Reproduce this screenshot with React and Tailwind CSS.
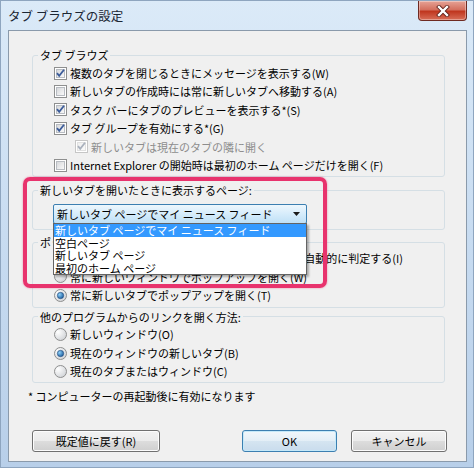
import React from 'react';

const font = "font-['Noto_Sans_CJK_JP',sans-serif]";

// Win7 style checkbox glyph
const CheckBox = ({ checked, disabled }) => (
  <svg width="13" height="13" viewBox="0 0 13 13" className="shrink-0">
    <defs>
      <linearGradient id={disabled ? 'cbd' : 'cbg'} x1="0" y1="0" x2="1" y2="1">
        <stop offset="0" stopColor={disabled ? '#eeeeee' : '#d4d6d9'} />
        <stop offset="1" stopColor="#fbfbfb" />
      </linearGradient>
    </defs>
    <rect x="0.5" y="0.5" width="12" height="12" fill="#fff" stroke={disabled ? '#c6c6c6' : '#8e8f8f'} />
    <rect x="2.5" y="2.5" width="8" height="8" fill={`url(#${disabled ? 'cbd' : 'cbg'})`} stroke={disabled ? '#e0e0e0' : '#b8bcc2'} />
    {checked && (
      <path d="M3 6.2 L5.2 8.8 L10 2.8" fill="none" stroke={disabled ? '#a9b1bd' : '#3c5c9a'} strokeWidth="1.8" />
    )}
  </svg>
);

const Radio = ({ checked }) => (
  <svg width="13" height="13" viewBox="0 0 13 13" className="shrink-0">
    <defs>
      <radialGradient id="rbg" cx="0.3" cy="0.3" r="0.8">
        <stop offset="0" stopColor="#ffffff" />
        <stop offset="1" stopColor="#cfd2d6" />
      </radialGradient>
      <radialGradient id="rdot" cx="0.35" cy="0.35" r="0.7">
        <stop offset="0" stopColor="#8ed0f8" />
        <stop offset="1" stopColor="#1a5c9e" />
      </radialGradient>
    </defs>
    <circle cx="6.5" cy="6.5" r="6" fill="url(#rbg)" stroke="#8e8f8f" />
    {checked && <circle cx="6.5" cy="6.5" r="3.2" fill="url(#rdot)" stroke="#2a4f7c" strokeWidth="0.6" />}
  </svg>
);

const Row = ({ children, indent, gray }) => (
  <div className={`h-[18.4px] flex items-center gap-[3px] whitespace-nowrap ${indent ? 'pl-[21px]' : ''} ${gray ? 'text-[#8d8d8d]' : ''}`}>
    {children}
  </div>
);

const Group = ({ title, className, children }) => (
  <fieldset className={`border border-[#d5dfe5] rounded-[3px] min-w-0 ${className}`}>
    <legend className="ml-[5px] px-[2px] leading-[14px]">{title}</legend>
    {children}
  </fieldset>
);

const CloseButton = () => (
  <div className="w-[49px] h-[20px] rounded-b-[4px] border border-t-0 border-[#6e2a22] bg-[linear-gradient(#e6a396,#d4705f_45%,#c0371f_55%,#d86e58)] flex items-center justify-center shadow-[inset_0_0_0_1px_rgba(255,255,255,0.35)]">
    <svg width="14" height="12" viewBox="0 0 14 12">
      <path d="M3 2 L11 10 M11 2 L3 10" stroke="#5b1d16" strokeWidth="4" strokeLinecap="square" />
      <path d="M3 2 L11 10 M11 2 L3 10" stroke="#ffffff" strokeWidth="2.4" strokeLinecap="square" />
    </svg>
  </div>
);

const Button = ({ children, primary, className }) => (
  <button
    className={`h-[22px] rounded-[3px] border text-[11px] leading-none flex items-center justify-center ${
      primary
        ? 'border-[#3c7fb1] bg-[linear-gradient(#f1f7fb,#e3eef6_50%,#d5e5f1_50%,#c9dced)] shadow-[inset_0_0_0_1px_#c5e9f9]'
        : 'border-[#707070] bg-[linear-gradient(#f2f2f2,#ebebeb_50%,#dddddd_50%,#cfcfcf)] shadow-[inset_0_0_0_1px_#fcfcfc]'
    } ${className}`}
  >
    {children}
  </button>
);

const options = ['新しいタブ ページでマイ ニュース フィード', '空白ページ', '新しいタブ ページ', '最初のホーム ページ'];

export default function App() {
  return (
    <div className={`w-[474px] h-[468px] flex flex-col bg-gradient-to-b from-[#dbeaf8] via-[#c8dcf1] to-[#b8cfe9] border border-[#8ea5bf] text-[11px] text-black ${font}`}>
      {/* title bar */}
      <div className="h-[29px] shrink-0 flex items-start justify-between pl-[7px] pr-[6px]">
        <span className="mt-[6px] text-[12.5px] text-[#1b2633]">タブ ブラウズの設定</span>
        <CloseButton />
      </div>

      {/* client area */}
      <div className="relative flex-1 ml-[7px] mr-[6px] mb-[5px] border border-[#8a9aab] bg-[#f0f0f0] flex flex-col pl-[23px] pr-[21px] pt-[17px] pb-[9px]">
        <Group title="タブ ブラウズ">
          <div className="pl-[21px] pt-[2px] pb-[2px]">
            <Row><CheckBox checked />複数のタブを閉じるときにメッセージを表示する(W)</Row>
            <Row><CheckBox />新しいタブの作成時には常に新しいタブへ移動する(A)</Row>
            <Row><CheckBox checked />タスク バーにタブのプレビューを表示する*(S)</Row>
            <Row><CheckBox checked />タブ グループを有効にする*(G)</Row>
            <Row indent gray><CheckBox checked disabled />新しいタブは現在のタブの隣に開く</Row>
            <Row><CheckBox />Internet Explorer の開始時は最初のホーム ページだけを開く(F)</Row>
          </div>
        </Group>

        <Group title="新しいタブを開いたときに表示するページ:" className="mt-[6px]">
          <div className="pl-[20px] pt-[7px] pb-[5px]">
            <div className="relative w-[254px]">
              <div className="h-[20px] rounded-[2px] border border-[#3c7fb1] bg-[linear-gradient(#eef7fd,#d6ecfb_50%,#bfe0f6)] flex items-center justify-between pl-[3px] pr-[6px]">
                <span>{options[0]}</span>
                <svg width="7" height="4" viewBox="0 0 7 4"><path d="M0 0 H7 L3.5 4 Z" fill="#1a1a1a" /></svg>
              </div>
              {/* open list */}
              <div className="absolute left-0 top-[19px] z-10 w-[254px] bg-white border border-[#646464] shadow-[2px_2px_2px_rgba(0,0,0,0.3)]">
                {options.map((o, i) => (
                  <div key={o} className={`h-[12.5px] leading-[12.5px] pl-[1px] ${i === 0 ? 'bg-[#3399ff] text-white' : ''}`}>{o}</div>
                ))}
              </div>
            </div>
          </div>
        </Group>

        <Group title="ポップアップの発生時:" className="mt-[5px]">
          <div className="pl-[21px] pb-[2px]">
            <Row><Radio />ポップアップを開く方法を Internet Explorer で自動的に判定する(I)</Row>
            <Row><Radio />常に新しいウィンドウでポップアップを開く(W)</Row>
            <Row><Radio checked />常に新しいタブでポップアップを開く(T)</Row>
          </div>
        </Group>

        <Group title="他のプログラムからのリンクを開く方法:" className="mt-[2px]">
          <div className="pl-[21px] pt-[2px] pb-[1px]">
            <Row><Radio />新しいウィンドウ(O)</Row>
            <Row><Radio checked />現在のウィンドウの新しいタブ(B)</Row>
            <Row><Radio />現在のタブまたはウィンドウ(C)</Row>
          </div>
        </Group>

        <p className="mt-[6px] -ml-[4px] leading-[14px]">* コンピューターの再起動後に有効になります</p>

        <div className="mt-auto flex items-center">
          <Button className="w-[128px]">既定値に戻す(R)</Button>
          <Button primary className="w-[95px] ml-auto">OK</Button>
          <Button className="w-[96px] ml-[14px] -mr-[2px]">キャンセル</Button>
        </div>

        {/* highlight annotation */}
        <div className="absolute left-[14px] top-[146px] z-20 w-[304px] h-[111px] border-[4px] border-[#e8336d] rounded-[7px] shadow-[0_0_2px_rgba(232,51,109,0.6)] pointer-events-none" />
      </div>
    </div>
  );
}
